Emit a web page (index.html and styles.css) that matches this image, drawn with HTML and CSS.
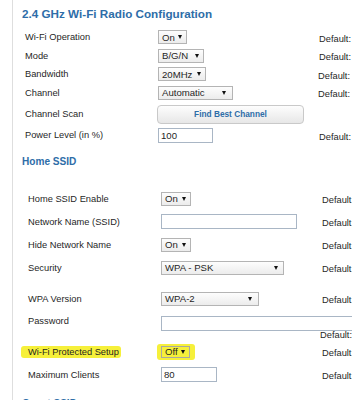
FILE: index.html
```html
<!DOCTYPE html>
<html lang="en">
<head>
    <meta charset="UTF-8">
    <meta name="viewport" content="width=device-width, initial-scale=1.0">
    <title>2.4 GHz Wi-Fi Radio Configuration</title>
    <link rel="stylesheet" href="styles.css">
</head>
<body>
    <div class="page">
        <h1 class="title">2.4 GHz Wi-Fi Radio Configuration</h1>

        <div class="form form-radio">
            <div class="row">
                <span class="label">Wi-Fi Operation</span>
                <span class="select select-on"><span>On</span><i class="caret"></i></span>
                <span class="default">Default:</span>
            </div>
            <div class="row">
                <span class="label">Mode</span>
                <span class="select select-mode"><span>B/G/N</span><i class="caret"></i></span>
                <span class="default">Default:</span>
            </div>
            <div class="row">
                <span class="label">Bandwidth</span>
                <span class="select select-bw"><span>20MHz</span><i class="caret"></i></span>
                <span class="default default-left">Default:</span>
            </div>
            <div class="row">
                <span class="label">Channel</span>
                <span class="select select-channel"><span>Automatic</span><i class="caret"></i></span>
                <span class="default default-left">Default:</span>
            </div>
            <div class="row row-button">
                <span class="label">Channel Scan</span>
                <button class="btn">Find Best Channel</button>
                <span></span>
            </div>
            <div class="row">
                <span class="label">Power Level (in %)</span>
                <span class="input input-power">100</span>
                <span class="default">Default:</span>
            </div>
        </div>

        <h2 class="section">Home SSID</h2>

        <div class="form form-ssid">
            <div class="row">
                <span class="label">Home SSID Enable</span>
                <span class="select select-on2"><span>On</span><i class="caret"></i></span>
                <span class="default">Default:</span>
            </div>
            <div class="row">
                <span class="label">Network Name (SSID)</span>
                <span class="input input-name"></span>
                <span class="default">Default:</span>
            </div>
            <div class="row">
                <span class="label">Hide Network Name</span>
                <span class="select select-on2"><span>On</span><i class="caret"></i></span>
                <span class="default">Default:</span>
            </div>
            <div class="row">
                <span class="label">Security</span>
                <span class="select select-security"><span>WPA - PSK</span><i class="caret"></i></span>
                <span class="default">Default:</span>
            </div>
            <div class="row row-gap">
                <span class="label">WPA Version</span>
                <span class="select select-wpa"><span>WPA-2</span><i class="caret"></i></span>
                <span class="default">Default:</span>
            </div>
            <div class="row row-password">
                <span class="label">Password</span>
                <span class="input input-password"></span>
                <span class="default default-wrap">Default:</span>
            </div>
            <div class="row row-wps">
                <span class="label"><mark class="marker marker-label">Wi-Fi Protected Setup</mark></span>
                <span><mark class="marker marker-select"><span class="select select-off"><span>Off</span><i class="caret"></i></span></mark></span>
                <span class="default">Default:</span>
            </div>
            <div class="row">
                <span class="label">Maximum Clients</span>
                <span class="input input-clients">80</span>
                <span class="default">Default:</span>
            </div>
        </div>

        <h2 class="section section-guest">Guest SSID</h2>
    </div>
</body>
</html>
```

FILE: styles.css
```css
* {
    box-sizing: border-box;
}

:root {
    --blue: #2e6da8;
    --text: #1f1f1f;
    --border: #b4b4b4;
    --input-border: #a9b6c5;
    --rule: #dedede;
    --marker: #f6f03a;
}

body {
    margin: 0;
    height: 400px;
    overflow: hidden;
    background: #fff;
    font-family: "Liberation Sans", Arial, sans-serif;
    color: var(--text);
}

.page {
    margin-left: 12px;
    min-height: 400px;
    padding-left: 9px;
    border-left: 1px solid var(--rule);
}

.title {
    margin: 0;
    padding-top: 7px;
    font-size: 11.7px;
    line-height: 14px;
    font-weight: bold;
    color: var(--blue);
}

.section {
    margin: 11px 0 0;
    font-size: 10.1px;
    line-height: 12px;
    font-weight: bold;
    color: var(--blue);
}

.section-guest {
    margin-top: 12px;
}

.form {
    display: flex;
    flex-direction: column;
}

.form-radio {
    margin-top: 7px;
    padding-left: 3px;
}

.form-ssid {
    margin-top: 19.5px;
    padding-left: 6px;
}

.row {
    display: grid;
    grid-template-columns: 133px 161px 1fr;
    align-items: center;
    justify-items: start;
    height: 18.5px;
    font-size: 9.3px;
    white-space: nowrap;
}

.form-ssid .row {
    height: 23px;
}

.row-button {
    height: 24px;
}

.form-ssid .row-gap {
    margin-top: 8px;
}

.form-ssid .row-password {
    height: 28px;
    grid-template-rows: 21px 7px;
}

.form-ssid .row-wps {
    margin-top: 2px;
}

.default {
    padding-top: 3px;
}

.default-left {
    margin-left: -1px;
}

.default-wrap {
    grid-column: 3;
    grid-row: 2;
    margin-left: -2px;
    padding-top: 0;
}

/* Listas e campos */
.select {
    display: inline-flex;
    align-items: center;
    justify-content: space-between;
    height: 14px;
    padding: 0 4px 0 3px;
    border: 1px solid var(--border);
    background: linear-gradient(#fdfdfd, #ececec);
    font-size: 9.6px;
    color: #1f1f1f;
}

.caret {
    width: 0;
    height: 0;
    border-left: 2.5px solid transparent;
    border-right: 2.5px solid transparent;
    border-top: 4px solid #111;
}

.select-on { width: 29px; }
.select-mode { width: 46px; }
.select-bw { width: 48px; }
.select-channel { width: 75px; padding-right: 6px; }
.select-on2 { width: 30px; }
.select-security { width: 123px; padding-right: 5px; }
.select-wpa { width: 98px; padding-right: 6px; }

.select-off {
    width: 29px;
    height: 12px;
    background: transparent;
    border-color: #a9a9a0;
}

.input {
    display: block;
    height: 15px;
    padding: 0 2px;
    border: 1px solid var(--input-border);
    background: #fff;
    font-size: 9.6px;
    line-height: 13px;
    color: #1f1f1f;
}

.input-power { width: 55px; }
.input-name { width: 136px; }
.input-clients { width: 56px; }

.input-password {
    width: 210px;
    margin-top: 6px;
}

.btn {
    display: flex;
    align-items: center;
    justify-content: center;
    width: 147px;
    height: 19px;
    margin-left: -1px;
    padding: 0;
    border: 1px solid #c9c9c9;
    border-radius: 4px;
    background: linear-gradient(#fdfdfd, #e7e7e7);
    font-family: inherit;
    font-size: 8.3px;
    font-weight: bold;
    color: var(--blue);
}

/* Marcador amarelo */
.marker {
    display: inline-block;
    background: var(--marker);
    color: inherit;
    border-radius: 3px;
}

.marker-label {
    margin-left: -7px;
    padding: 1px 2px 1px 7px;
}

.marker-select {
    margin-left: -4px;
    padding: 2px 5px 2px 4px;
}
```
